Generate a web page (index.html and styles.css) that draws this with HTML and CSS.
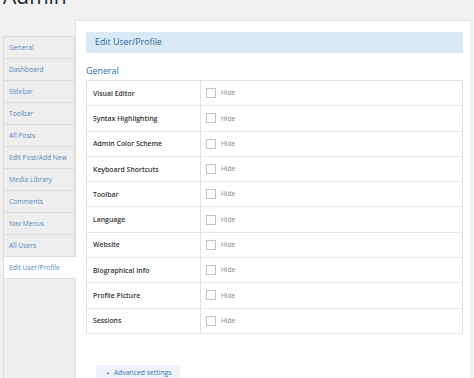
FILE: index.html
```html
<!DOCTYPE html>
<html lang="en">
<head>
    <meta charset="UTF-8">
    <title>Admin</title>
    <link rel="stylesheet" href="styles.css">
</head>
<body>
    <h1>Admin</h1>
    <div id="wrap">
        <ul id="tabs">
            <li>General</li>
            <li>Dashboard</li>
            <li>Sidebar</li>
            <li>Toolbar</li>
            <li>All Posts</li>
            <li>Edit Post/Add New</li>
            <li>Media Library</li>
            <li>Comments</li>
            <li>Nav Menus</li>
            <li>All Users</li>
            <li class="active">Edit User/Profile</li>
        </ul>
        <div id="panel">
            <div class="panel-title">Edit User/Profile</div>
            <h3>General</h3>
            <table class="options">
                <tr><th>Visual Editor</th><td><span class="check"></span>Hide</td></tr>
                <tr><th>Syntax Highlighting</th><td><span class="check"></span>Hide</td></tr>
                <tr><th>Admin Color Scheme</th><td><span class="check"></span>Hide</td></tr>
                <tr><th>Keyboard Shortcuts</th><td><span class="check"></span>Hide</td></tr>
                <tr><th>Toolbar</th><td><span class="check"></span>Hide</td></tr>
                <tr><th>Language</th><td><span class="check"></span>Hide</td></tr>
                <tr><th>Website</th><td><span class="check"></span>Hide</td></tr>
                <tr><th>Biographical Info</th><td><span class="check"></span>Hide</td></tr>
                <tr><th>Profile Picture</th><td><span class="check"></span>Hide</td></tr>
                <tr><th>Sessions</th><td><span class="check"></span>Hide</td></tr>
            </table>
            <div class="advanced"><span class="arrow">&#9650;</span>Advanced settings</div>
        </div>
    </div>
</body>
</html>
```

FILE: styles.css
```css
body {
    margin: 0;
    background: #f1f1f1;
    font-family: 'Open Sans', 'Noto Sans', sans-serif;
    color: #333;
    height: 378px;
    overflow: hidden;
}
h1 {
    margin: -17px 0 0 3px;
    font-size: 21px;
    font-weight: 400;
    line-height: 26px;
    color: #23282d;
}
#wrap {
    display: flex;
    margin-top: 11px;
    height: 400px;
}
#tabs {
    list-style: none;
    margin: 16px 0 0 3px;
    padding: 0;
    width: 71px;
    background: #eeeeee;
    border: 1px solid #dcdcdc;
    border-right: none;
}
#tabs li {
    height: 21px;
    line-height: 21px;
    padding-left: 5px;
    font-size: 6.7px;
    color: #5a8cb9;
    border-bottom: 1px solid #dcdcdc;
    border-right: 1px solid #dcdcdc;
    white-space: nowrap;
}
#tabs li.active {
    background: #fff;
    border-right-color: #fff;
    margin-right: -1px;
    position: relative;
}
#panel {
    flex: 1;
    background: #fff;
    border-top: 1px solid #e2e2e2;
    border-left: 1px solid #e2e2e2;
    margin-right: 4px;
    padding: 11px 7px 0 10px;
}
.panel-title {
    height: 21px;
    line-height: 21px;
    background: #d9e9f5;
    color: #2e6a9e;
    font-size: 8.8px;
    padding-left: 9px;
}
h3 {
    margin: 10px 0 2px;
    font-size: 8.9px;
    line-height: 15px;
    font-weight: 400;
    color: #2e6da4;
}
.options {
    width: 100%;
    border-collapse: collapse;
    border: 1px solid #e3e3e3;
}
.options tr {
    height: 25.3px;
    border-bottom: 1px solid #e9e9e9;
}
.options th {
    width: 107px;
    text-align: left;
    padding: 0 0 0 6px;
    font-size: 6.9px;
    font-weight: 600;
    color: #333;
    border-right: 1px solid #e3e3e3;
}
.options td {
    padding: 0 0 0 5px;
    font-size: 6.6px;
    color: #888;
}
.check {
    display: inline-block;
    width: 8px;
    height: 8px;
    border: 1px solid #c4c4c4;
    vertical-align: middle;
    margin: -1px 5px 0 0;
}
.advanced {
    display: inline-block;
    margin: 31px 0 0 10px;
    width: 74px;
    height: 14px;
    padding-left: 10px;
    background: #edf3f8;
    color: #2f78b8;
    font-size: 6.8px;
    line-height: 16px;
    white-space: nowrap;
}
.arrow {
    font-size: 4px;
    margin-right: 4px;
    vertical-align: 1px;
}
```
